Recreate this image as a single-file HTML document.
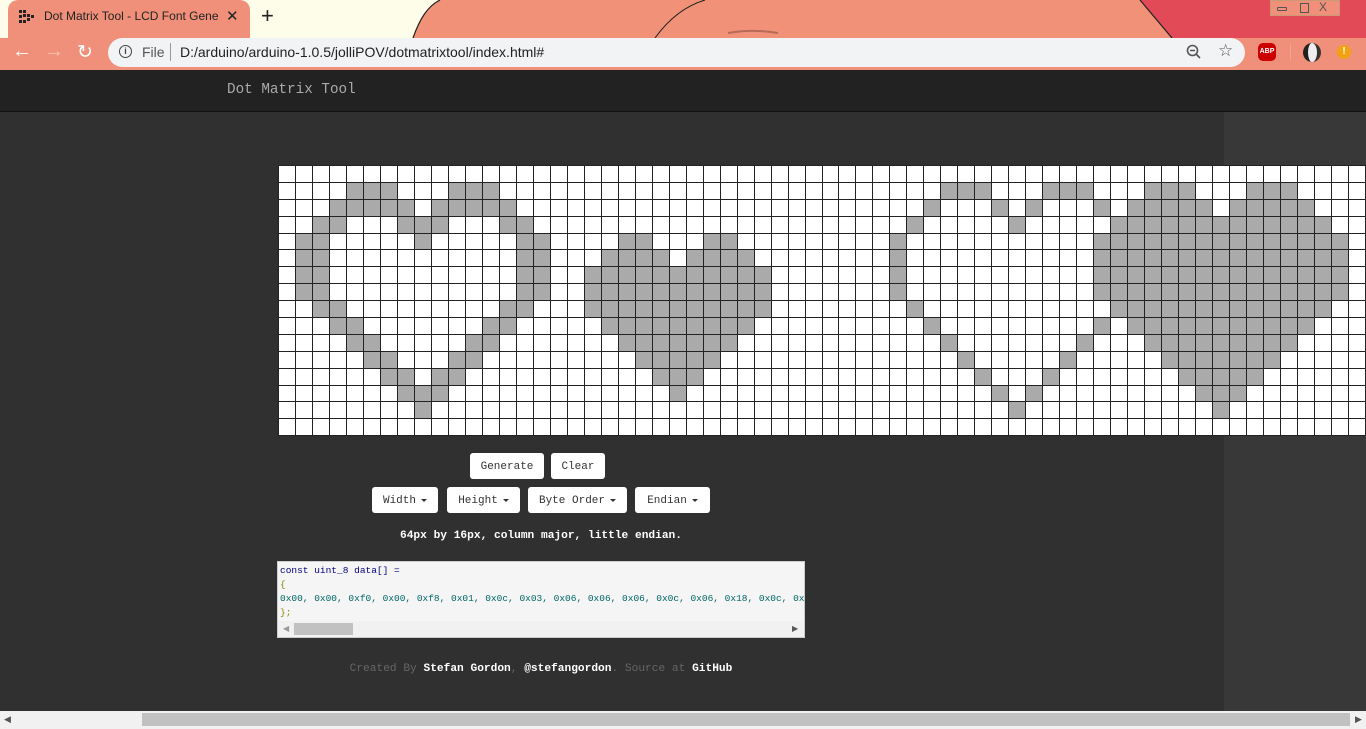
<!DOCTYPE html>
<html><head><meta charset="utf-8"><style>
*{margin:0;padding:0;box-sizing:border-box}
body{width:1366px;height:729px;overflow:hidden;background:#303030;font-family:"Liberation Mono",monospace;position:relative}
.abs{position:absolute}
#navrow{left:0;top:38px;width:1366px;height:32px;background:#f0907a}
#omni{left:108px;top:38px;width:1137px;height:29px;background:#f1f3f4;border-radius:15px}
#hdr{left:0;top:70px;width:1366px;height:42px;background:#222;border-bottom:1px solid #111}
#grid{left:278px;top:165px;border-collapse:collapse;table-layout:fixed}
#grid td{width:17px;height:16.9px;border:1px solid #222;background:#fff;padding:0;font-size:0;line-height:0}
#grid td.on{background:#aaa}
.btn{position:absolute;background:#fff;border-radius:3px;height:26px;font-size:11px;color:#333;text-align:center;line-height:28px}
.car{display:inline-block;border-left:3px solid transparent;border-right:3px solid transparent;border-top:3px solid #333;vertical-align:middle;margin-left:5px}
</style></head><body>
<svg class="abs" style="left:0;top:0" width="1366" height="38">
<rect width="1366" height="38" fill="#fdfdea"/>
<path d="M413 38 C420 18 428 6 440 0 L1140 0 L1172 38Z" fill="#f19178"/>
<path d="M413 38 C420 18 428 6 440 0" stroke="#222" fill="none" stroke-width="1.2"/>
<path d="M1140 0 L1366 0 L1366 38 L1172 38Z" fill="#e24a57"/>
<path d="M1140 0 L1172 38" stroke="#222" stroke-width="1.2"/>
<path d="M655 38 C668 20 685 6 705 0" stroke="#222" fill="none"/>
<path d="M728 33 C745 30 760 30 778 33" stroke="#b86a58" stroke-width="2" fill="none"/>
</svg>
<div class="abs" style="left:8px;top:0;width:242px;height:38px;background:#f0907a;border-radius:10px 10px 0 0"></div>
<svg class="abs" style="left:19px;top:10px" width="16" height="14"><g fill="#222"><rect x="0" y="0" width="3" height="3"/><rect x="4" y="0" width="3" height="3"/><rect x="4" y="4" width="3" height="3"/><rect x="8" y="4" width="3" height="3"/><rect x="12" y="5" width="3" height="3"/><rect x="8" y="8" width="3" height="3"/><rect x="0" y="10" width="3" height="3"/><rect x="4" y="10" width="3" height="3"/><rect x="0" y="5" width="3" height="3"/></g></svg>
<div class="abs" style="left:44px;top:9px;font:12px 'Liberation Sans',sans-serif;color:#222">Dot Matrix Tool - LCD Font Gene</div>
<div class="abs" style="left:226px;top:7px;font:15px 'Liberation Sans';color:#222">✕</div>
<div class="abs" style="left:261px;top:3px;font:22px 'Liberation Sans';color:#222">+</div>
<div class="abs" style="left:1270px;top:0;width:70px;height:16px;background:#f0907a;border:1px solid #c97"></div>
<div class="abs" style="left:1277px;top:7px;width:10px;height:4px;border:1px solid #555;border-radius:1px"></div>
<div class="abs" style="left:1300px;top:3px;width:9px;height:10px;border:1px solid #555"></div>
<div class="abs" style="left:1319px;top:0px;font:12px 'Liberation Sans';color:#555">X</div>
<div class="abs" id="navrow"></div>
<div class="abs" style="left:12px;top:40px;font:20px 'Liberation Sans';color:#fff">←</div>
<div class="abs" style="left:44px;top:40px;font:20px 'Liberation Sans';color:#f8c0b0">→</div>
<div class="abs" style="left:77px;top:41px;font:19px 'Liberation Sans';color:#fff">↻</div>
<div class="abs" id="omni"></div>
<div class="abs" style="left:119px;top:45px;width:13px;height:13px;border:1.5px solid #444;border-radius:50%;font:bold 9px 'Liberation Sans';text-align:center;line-height:10px;color:#444">i</div>
<div class="abs" style="left:142px;top:44px;font:14px 'Liberation Sans',sans-serif;color:#555">File</div>
<div class="abs" style="left:170px;top:43px;width:1px;height:18px;background:#999"></div>
<div class="abs" style="left:180px;top:44px;font:14px 'Liberation Sans',sans-serif;color:#222">D:/arduino/arduino-1.0.5/jolliPOV/dotmatrixtool/index.html#</div>
<svg class="abs" style="left:1186px;top:44px" width="16" height="16"><circle cx="6.5" cy="6.5" r="5" fill="none" stroke="#555" stroke-width="1.6"/><path d="M10 10 L14 14 M4 6.5 H9" stroke="#555" stroke-width="1.6"/></svg>
<div class="abs" style="left:1218px;top:41px;font:17px 'Liberation Sans';color:#555">☆</div>
<div class="abs" style="left:1258px;top:43px;width:18px;height:18px;background:#c00;border-radius:5px;font:bold 7px 'Liberation Sans';color:#fff;text-align:center;line-height:18px">ABP</div>
<div class="abs" style="left:1290px;top:43px;width:1px;height:18px;background:#e8a897"></div>
<div class="abs" style="left:1303px;top:43px;width:18px;height:19px;background:#eee;border-radius:50%;border-left:5px solid #222;border-right:4px solid #333"></div>
<div class="abs" style="left:1337px;top:45px;width:14px;height:14px;background:#f2a20e;border-radius:50%;font:bold 10px 'Liberation Sans';color:#fff;text-align:center;line-height:14px">!</div>
<div class="abs" id="hdr"><div class="abs" style="left:227px;top:12px;font-size:14.3px;color:#aaa">Dot Matrix Tool</div></div>
<div class="abs" style="left:1224px;top:112px;width:142px;height:599px;background:#383838"></div>
<table id="grid" class="abs"></table>
<div class="btn" style="left:470px;top:453px;width:74px">Generate</div>
<div class="btn" style="left:551px;top:453px;width:54px">Clear</div>
<div class="btn" style="left:372px;top:487px;width:66px">Width<span class="car"></span></div>
<div class="btn" style="left:447px;top:487px;width:73px">Height<span class="car"></span></div>
<div class="btn" style="left:528px;top:487px;width:99px">Byte Order<span class="car"></span></div>
<div class="btn" style="left:635px;top:487px;width:75px">Endian<span class="car"></span></div>
<div class="abs" style="left:278px;top:530px;width:526px;text-align:center;font:bold 11.2px 'Liberation Mono';color:#fff">64px by 16px, column major, little endian.</div>
<div class="abs" style="left:277px;top:561px;width:528px;height:77px;background:#f5f5f5;border:1px solid #ccc;overflow:hidden;font:9.5px/14px 'Liberation Mono';padding:2px 2px;white-space:nowrap">
<div style="color:#000080">const uint_8 data[] =</div>
<div style="color:#880">{</div>
<div style="color:#066">0x00, 0x00, 0xf0, 0x00, 0xf8, 0x01, 0x0c, 0x03, 0x06, 0x06, 0x06, 0x0c, 0x06, 0x18, 0x0c, 0x0c, 0x18</div>
<div style="color:#880">};</div>
</div>
<div class="abs" style="left:278px;top:621px;width:526px;height:16px;background:#f1f1f1"></div>
<div class="abs" style="left:294px;top:623px;width:59px;height:12px;background:#c1c1c1"></div>
<div class="abs" style="left:283px;top:624px;font:8px 'Liberation Sans';color:#999">◀</div>
<div class="abs" style="left:792px;top:624px;font:8px 'Liberation Sans';color:#555">▶</div>
<div class="abs" style="left:278px;top:663px;width:526px;text-align:center;font:11.2px 'Liberation Mono';color:#666">Created By <b style="color:#fff">Stefan Gordon</b>, <b style="color:#fff">@stefangordon</b>. Source at <b style="color:#fff">GitHub</b></div>
<div class="abs" style="left:0;top:711px;width:1366px;height:18px;background:#f1f1f1"></div>
<div class="abs" style="left:142px;top:713px;width:1208px;height:13px;background:#c1c1c1"></div>
<div class="abs" style="left:4px;top:714px;font:9px 'Liberation Sans';color:#555">◀</div>
<div class="abs" style="left:1355px;top:714px;font:9px 'Liberation Sans';color:#555">▶</div>
<script>
var A=[[],[4,5,6,10,11,12,39,40,41,45,46,47,51,52,53,57,58,59],
[3,4,5,6,7,9,10,11,12,13,38,42,44,48,50,51,52,53,54,56,57,58,59,60],
[2,3,7,8,9,13,14,37,43,[49,61]],
[1,2,8,14,15,20,21,25,26,36,[48,62]],
[1,2,14,15,19,20,21,22,24,25,26,27,36,[48,62]],
[1,2,14,15,[18,28],36,[48,62]],
[1,2,14,15,[18,28],36,[48,62]],
[2,3,13,14,[18,28],37,[49,61]],
[3,4,12,13,[19,27],38,48,[50,60]],
[4,5,11,12,[20,26],39,47,[51,59]],
[5,6,10,11,[21,25],40,46,[52,58]],
[6,7,9,10,22,23,24,41,45,[53,57]],
[7,8,9,23,42,44,54,55,56],
[8,43,55],[]];
var h='';for(var r=0;r<16;r++){var s={};A[r].forEach(function(v){if(v.length){for(var k=v[0];k<=v[1];k++)s[k]=1}else s[v]=1});h+='<tr>';for(var c=0;c<64;c++)h+='<td'+(s[c]?' class="on"':'')+'></td>';h+='</tr>'}
document.getElementById('grid').innerHTML=h;
</script>
</body></html>
